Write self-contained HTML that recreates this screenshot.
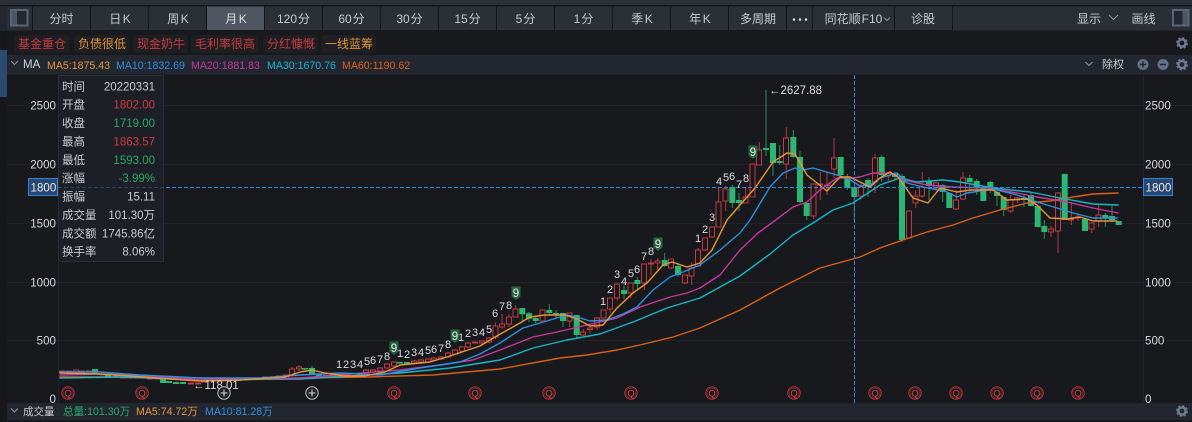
<!DOCTYPE html>
<html lang="zh"><head><meta charset="utf-8"><title>K线</title>
<style>
html,body{margin:0;padding:0;width:1192px;height:422px;overflow:hidden;background:#18191c}
svg{display:block;filter:blur(.3px)}
text{font-family:"Liberation Sans","Noto Sans CJK SC",sans-serif;font-size:11.5px;fill:#c9ccd1}
.t{font-size:12px;fill:#c6cad0;text-anchor:middle}
.m{font-size:10.6px}
.tag{font-size:12px}
.r{text-anchor:end}
.n{font-size:11px;text-anchor:middle;fill:#dadcdf}
.b{font-size:11.5px;text-anchor:middle;fill:#e4e6e8}
.q{font-size:9.5px;text-anchor:middle;fill:#dc444b}
.ax{font-size:11.6px;fill:#d4d6da}
.red{fill:#d0383f}.grn{fill:#2aa866}
</style></head><body>
<svg width="1192" height="422" viewBox="0 0 1192 422" xmlns="http://www.w3.org/2000/svg">
<defs>
<clipPath id="cc"><rect x="7" y="75" width="1185" height="328"/></clipPath>
<g id="gear"><circle r="3.6" fill="none" stroke="#6c7d93" stroke-width="2.4"/><circle r="5" fill="none" stroke="#6c7d93" stroke-width="1.8" stroke-dasharray="2.2 1.73"/></g>
<g id="qm"><circle r="6.2" fill="none" stroke="#c8383f" stroke-width=".9"/><circle r="5" fill="none" stroke="#a8343a" stroke-width=".5"/><text class="q" y="3.4">Q</text></g>
<g id="pl"><circle r="6.2" fill="#1e1f22" stroke="#b9bcc1" stroke-width="1"/><path d="M-3.5 0H3.5M0-3.5V3.5" stroke="#d8dadd" stroke-width="1.1"/></g>
<path id="bd" d="M-4.5-6.500h9v10l-4.500 3.500l-4.500-3.500z" fill="#24653d"/>
</defs>

<rect width="1192" height="422" fill="#18191c"/>
<!-- top strip -->
<rect width="1192" height="5" fill="#2b2f36"/>
<rect y="5" width="1192" height="1.5" fill="#15161a"/>
<!-- left col -->
<rect x="0" y="6" width="7" height="416" fill="#15171b"/>
<rect x="0" y="50" width="7" height="47" fill="#2a4a72"/>
<rect x="0" y="6" width="7" height="25" fill="#23272e"/>
<!-- tab bar -->
<rect x="7" y="6.500" width="1185" height="24" fill="#2a2e35"/>
<g fill="#2b3037" stroke="#15161a" stroke-width="1">
<rect x="32.500" y="6" width="58" height="24.500"/><rect x="90.500" y="6" width="58" height="24.500"/><rect x="148.500" y="6" width="58" height="24.500"/>
<rect x="264.500" y="6" width="58" height="24.500"/><rect x="322.500" y="6" width="58" height="24.500"/><rect x="380.500" y="6" width="58" height="24.500"/>
<rect x="438.500" y="6" width="58" height="24.500"/><rect x="496.500" y="6" width="58" height="24.500"/><rect x="554.500" y="6" width="58" height="24.500"/>
<rect x="612.500" y="6" width="58" height="24.500"/><rect x="670.500" y="6" width="58" height="24.500"/><rect x="728.500" y="6" width="58" height="24.500"/>
<rect x="786.500" y="6" width="26" height="24.500"/><rect x="812.500" y="6" width="82" height="24.500"/><rect x="894.500" y="6" width="58" height="24.500"/>
</g>
<rect x="206.500" y="6" width="58" height="24.500" fill="#4f5661" stroke="#15161a"/>
<rect x="11" y="10" width="16.500" height="15.500" fill="#23272e" stroke="#566579" stroke-width="2"/><rect x="12" y="11" width="5" height="13.500" fill="#4c5666"/>
<rect x="1173" y="10" width="15.500" height="15.500" fill="#23272e" stroke="#566579" stroke-width="2"/><rect x="1182.500" y="11" width="5" height="13.500" fill="#4c5666"/>
<text class="t" x="61.500" y="23">分时</text><text class="t" x="120" y="23">日<tspan dx="1.5">K</tspan></text><text class="t" x="178" y="23">周<tspan dx="1.5">K</tspan></text><text class="t" x="236" y="23" style="fill:#dcdfe3">月<tspan dx="1.5">K</tspan></text>
<text class="t" x="293.500" y="23">120<tspan dx="1">分</tspan></text><text class="t" x="351.500" y="23">60<tspan dx="1">分</tspan></text><text class="t" x="409.500" y="23">30<tspan dx="1">分</tspan></text><text class="t" x="467.500" y="23">15<tspan dx="1">分</tspan></text>
<text class="t" x="525.500" y="23">5<tspan dx="1">分</tspan></text><text class="t" x="583.500" y="23">1<tspan dx="1">分</tspan></text><text class="t" x="642" y="23">季<tspan dx="1.5">K</tspan></text><text class="t" x="700" y="23">年<tspan dx="1.5">K</tspan></text><text class="t" x="758" y="23">多周期</text>
<g fill="#d0d3d8"><circle cx="794" cy="19.500" r="1.300"/><circle cx="800" cy="19.500" r="1.300"/><circle cx="806" cy="19.500" r="1.300"/></g>
<text class="t" x="853.500" y="23">同花顺<tspan dx="1">F10</tspan></text><path d="M884 17.500l3 3l3-3" fill="none" stroke="#8b919a"/>
<text class="t" x="923" y="23">诊股</text>
<text class="t" x="1089" y="23">显示</text><path d="M1109 15l4.500 4.500l4.500-4.500" fill="none" stroke="#8b919a" stroke-width="1.100"/>
<text class="t" x="1143.500" y="23">画线</text>

<!-- tags row -->
<g fill="#1d1f23">
<rect x="14" y="35" width="56" height="18" rx="4"/><rect x="74" y="35" width="55" height="18" rx="4"/><rect x="133" y="35" width="55" height="18" rx="4"/><rect x="191" y="35" width="67" height="18" rx="4"/><rect x="263" y="35" width="55" height="18" rx="4"/><rect x="321" y="35" width="55" height="18" rx="4"/>
</g>
<text class="tag" x="18" y="48" style="fill:#c9393f">基金重仓</text><text class="tag" x="78" y="48" style="fill:#e0933a">负债很低</text><text class="tag" x="137" y="48" style="fill:#c9393f">现金奶牛</text><text class="tag" x="195" y="48" style="fill:#c9393f">毛利率很高</text><text class="tag" x="267" y="48" style="fill:#c9393f">分红慷慨</text><text class="tag" x="325" y="48" style="fill:#e0933a">一线蓝筹</text>
<g transform="translate(1182,43)"><use href="#gear"/></g>

<!-- MA row -->
<rect x="7" y="55" width="1185" height="19.500" fill="#22272f"/>
<path d="M11 61l3.500 3.500l3.500-3.500" fill="none" stroke="#8b919a" stroke-width="1.100"/>
<text x="23" y="68" style="font-size:11.500px;fill:#d0d3d8">MA</text>
<text class="m" x="47" y="69" style="fill:#e8953a">MA5:1875.43</text>
<text class="m" x="116" y="69" style="fill:#2f8fe0">MA10:1832.69</text>
<text class="m" x="191" y="69" style="fill:#c5389c">MA20:1881.83</text>
<text class="m" x="267" y="69" style="fill:#19b5cf">MA30:1670.76</text>
<text class="m" x="342" y="69" style="fill:#e0601a">MA60:1190.62</text>
<path d="M1085.500 62l3.500 3.500l3.500-3.500" fill="none" stroke="#8b919a" stroke-width="1.100"/>
<text x="1102" y="68" style="font-size:11px;fill:#c9ccd1">除权</text>
<circle cx="1143" cy="64.500" r="5.500" fill="#5f7088"/><path d="M1140 64.500h6M1143 61.500v6" stroke="#22272f" stroke-width="1.500"/>
<circle cx="1163" cy="64.500" r="5.500" fill="#5f7088"/><path d="M1160 64.500h6" stroke="#22272f" stroke-width="1.500"/>
<g transform="translate(1182,64.500)"><use href="#gear"/></g>

<!-- chart -->
<g clip-path="url(#cc)">
<path d="M7 105.500H1192M7 164.500H1192M7 223.500H1192M7 282.500H1192M7 340.500H1192" stroke="#202228" fill="none"/>
<path d="M58.500 75V402M1143.500 75V402" stroke="#212329"/>

<!-- wicks red -->
<path fill="none" stroke="#b5373c" d="M292 367V376M299 365V371M366 369V374M373 369V373M380 367V372M387 363V369M394 361V367M414 360V364M421 359V363M428 358V363M434 357V361M441 356V360M448 352V358M455 349V355M461 346V352M468 342V348M482 340V344M489 337V343M495.500 322.500V339M502 314V329M509 314V327M515.700 305V317M542.700 310V322M569.700 313V327M583.300 329V336M590 325V334M597 317V330M603.700 310V319M610.300 298V313M617.300 283V301M630.700 283V298M644.300 264V290M651 259V275M657.700 258V270M671.300 259V269M685 275V284M691.700 262V285M698.300 248V266M705 238V251M712 227V238M718.700 188V227M725.700 186V211M745.700 187V203M752.700 164V197M759.300 142V165M786.300 127V179M813.700 184V219M820.300 172V200M827 172V195M834 138V178M861 184V199M875 154V193M888.300 172V182M909 211V238M915.700 190V208M922.300 172V198M936 182V190M956.300 190V210M963 172V200M1010.700 195V213M1017.300 197V203M1051 226V237M1058 192V253M1071.300 202V225M1078 215V221M1091.700 222V233M1098.700 205V227"/>
<!-- wicks green -->
<path fill="none" stroke="#2a8f5e" d="M312 366V375M522.300 308V322M529 312V322M535.700 317V323M549.300 304V315M556 310V318M563 313V327M576.700 315V338M624 285V299M637.300 277V289M664.700 253V267M678 263V277M732.300 185V208M739 193V211M766 90V156M773 143V176M779.700 145V165M793.300 130V158M800 151V203M806.700 203V220M840.700 157V178M847.300 174V190M854.300 187V222M868 178V197M881.700 155V182M895 172V180M902 174V242M929 177V200M942.700 184V202M969.700 175V193M976.700 179V195M990.300 181V193M997 189V206M1003.700 197V216M1024 195V207M1031 192V206M1044.300 220V239M1105.300 213V227M1112 206V222"/>
<!-- red bodies -->
<path fill="#18191c" stroke="#c23b40" d="M59.500 371h5v1h-5zM66.500 371h5v2h-5zM73.500 370h5v3h-5zM79.500 371h5v2h-5zM86.500 371h5v1h-5zM100.500 374h5v1h-5zM113.500 376h5v1h-5zM120.500 377h5v1h-5zM127.500 377h5v1h-5zM134.500 377h5v1h-5zM140.500 377h5v1h-5zM147.500 378h5v1h-5zM154.500 378h5v1h-5zM188.500 383h5v1h-5zM195.500 383h5v1h-5zM201.500 381h5v1h-5zM208.500 380h5v1h-5zM215.500 380h5v1h-5zM222.500 380h5v1h-5zM228.500 379h5v1h-5zM242.500 379h5v1h-5zM249.500 378h5v1h-5zM256.500 378h5v1h-5zM262.500 377h5v2h-5zM276.500 376h5v2h-5zM283.500 375h5v3h-5zM289.500 369h5v6h-5zM296.500 367h5v2h-5zM330.500 375h5v1h-5zM344.500 375h5v1h-5zM357.500 375h5v1h-5zM363.500 370h5v3h-5zM370.500 370h5v2h-5zM377.500 368h5v3h-5zM384.500 364h5v4h-5zM391.500 362h5v4h-5zM411.500 361h5v2h-5zM418.500 360h5v2h-5zM425.500 359h5v3h-5zM431.500 358h5v2h-5zM438.500 357h5v2h-5zM445.500 353h5v4h-5zM452.500 350h5v4h-5zM459.500 347h5v4h-5zM465.500 343h5v4h-5zM472.500 342h5v1h-5zM479.500 341h5v2h-5zM486.500 338h5v4h-5zM493 326h5v11h-5zM499.500 324h5v3h-5zM506.500 317h5v7h-5zM513 309h5v8h-5zM540 310h5v11h-5zM567 313h5v8h-5zM580.500 332h5v3h-5zM587.500 328h5v1.500h-5zM594.500 318h5v9h-5zM601 310h5v8h-5zM607.500 298h5v11h-5zM614.500 284h5v14h-5zM628 283h5v10h-5zM641.500 264h5v19h-5zM648.500 263h5v1h-5zM655 261h5v2h-5zM668.500 259h5v9h-5zM682.500 275h5v8h-5zM689 268h5v8h-5zM695.500 250h5v16h-5zM702.500 238h5v12h-5zM709.500 227h5v10h-5zM716 202h5v25h-5zM723 189h5v12h-5zM743 197h5v6h-5zM750 164h5v33h-5zM756.500 150h5v15h-5zM783.500 138h5v26h-5zM811 184h5v32h-5zM817.500 184h5v1h-5zM824.500 185h5v1h-5zM831.500 158h5v11h-5zM858.500 187h5v9h-5zM872.500 158h5v24h-5zM885.500 173h5v3h-5zM906.500 211h5v27h-5zM913 196h5v7h-5zM919.500 187h5v9h-5zM933.500 183h5v5h-5zM953.500 200h5v9h-5zM960.500 178h5v21h-5zM1008 200h5v11h-5zM1014.500 198h5v2h-5zM1048.500 229h5v3h-5zM1055.500 193h5v38h-5zM1068.500 219h5v1h-5zM1075.500 217h5v1h-5zM1089 223h5v6h-5zM1096 215h5v6h-5z"/>
<!-- green bodies -->
<path fill="#2bb673" d="M92 369h6v4h-6zM105 375h6v3h-6zM160 379h6v4h-6zM166 381h6v2h-6zM173 382h6v2h-6zM180 382h6v2h-6zM235 380h6v1h-6zM268 377h6v2h-6zM302 368h6v1.500h-6zM309 368h6v6h-6zM316 374h6v2h-6zM323 375h6v1h-6zM337 375h6v1h-6zM397 362h6v1.500h-6zM404 362h6v1.500h-6zM519.300 308h6v6.300h-6zM526 313.300h6v5.400h-6zM532.700 318h6v3h-6zM546.300 310h6v3h-6zM553 313h6v2h-6zM560 313h6v8h-6zM573.700 315h6v20h-6zM621 290h6v4h-6zM634.300 280h6v4h-6zM661.700 260h6v6h-6zM675 266h6v9h-6zM729.300 187h6v16h-6zM736 200h6v3h-6zM763 148h6v2h-6zM770 143h6v20h-6zM776.700 161h6v2h-6zM790.300 137h6v20h-6zM797 157h6v45h-6zM803.700 203h6v13h-6zM837.700 157h6v18h-6zM844.300 177h6v11h-6zM851.300 187h6v10h-6zM865 180h6v7h-6zM878.700 157h6v18h-6zM892 174h6v3h-6zM899 176h6v64h-6zM926 181h6v5h-6zM939.700 185h6v7h-6zM946.300 193h6v15h-6zM966.700 178h6v4h-6zM973.700 181h6v7h-6zM980.300 188h6v13h-6zM987.300 182h6v6h-6zM994 192h6v4h-6zM1000.700 197h6v13h-6zM1021 198h6v2h-6zM1028 195h6v11h-6zM1034.700 206h6v21h-6zM1041.300 226h6v6h-6zM1061.700 174h6v46h-6zM1082 219h6v12h-6zM1102.300 215h6v3h-6zM1109 216h6v4h-6zM1115.700 221h6v4h-6z"/>

<!-- MA lines -->
<g fill="none" stroke-width="1.400" stroke-linejoin="round" stroke-linecap="round">
<polyline stroke="#d9601a" points="60,377 150,377 250,379 300,378 367,377 433,375 500,369 560,358 587,355 617,350 640,345 673,337 700,328 740,310 780,288 820,268 860,257 880,248 900,241 927,232 953,225 973,218 1000,210 1027,203 1050,201 1073,197 1093,194 1118,193"/>
<polyline stroke="#19b5c8" points="60,378 120,377 200,380 300,379 350,376 400,373 450,368 500,360 533,348 567,340 600,334 633,322 667,308 700,298 740,276 770,254 793,235 813,223 833,210 853,203 865,195 880,185 900,178 917,182 943,180 960,182 993,188 1030,192 1060,198 1093,204 1118,205"/>
<polyline stroke="#c5389c" points="60,375 100,374 150,376 200,380 300,378 350,374 400,370 440,365 473,360 500,350 533,337 557,332 587,325 617,318 640,307 670,297 687,293 700,288 720,275 740,250 758,233 773,222 793,207 807,202 820,190 837,178 853,178 860,177 873,173 890,173 903,180 927,185 953,187 987,188 1017,193 1037,197 1067,202 1093,208 1118,213"/>
<polyline stroke="#2f8fe0" points="60,372 100,372 140,375 200,378 260,378 300,375 340,373 380,375 420,368 460,362 480,354 500,343 523,328 540,323 567,315 577,317 590,321 607,320 623,314 637,307 653,290 670,277 683,272 700,265 720,250 740,233 750,220 770,187 783,173 795,168 803,170 813,168 830,173 847,178 860,186 870,185 880,178 897,173 907,183 923,187 947,192 957,197 967,193 993,189 1017,195 1037,202 1057,208 1073,213 1093,218 1117,218"/>
<polyline stroke="#e8953a" points="60,373 100,374 130,376 170,379 200,381 240,380 285,377 300,372 312,370 325,373 345,376 365,376 385,372 400,365 430,362 450,356 480,346 495,337 520,323 530,317 545,315 565,315 577,319 590,326 603,325 617,308 633,293 647,283 663,265 672,262 687,267 700,263 712,250 727,220 740,205 755,188 773,162 787,153 795,154 807,175 817,183 827,191 840,177 850,177 870,187 880,178 890,172 898,177 913,198 928,203 940,188 957,192 970,190 993,190 1007,200 1027,199 1037,205 1050,218 1067,219 1080,217 1093,221 1117,221"/>
</g>

<!-- crosshair -->
<path d="M58 187.500H1143" stroke="#2f8be0" stroke-dasharray="4 2" fill="none"/>
<path d="M854.500 75V403" stroke="#2f8be0" stroke-dasharray="4 2" fill="none"/>

<!-- sequence labels -->
<g class="seq">
<text class="n" x="339" y="368">1</text><text class="n" x="346" y="368">2</text><text class="n" x="353" y="368">3</text><text class="n" x="360" y="368">4</text><text class="n" x="367" y="365">5</text><text class="n" x="373" y="364">6</text><text class="n" x="380" y="363">7</text><text class="n" x="387" y="360">8</text>
<text class="n" x="400" y="357">1</text><text class="n" x="407" y="358">2</text><text class="n" x="414" y="356">3</text><text class="n" x="421" y="356">4</text><text class="n" x="428" y="354">5</text><text class="n" x="434" y="353">6</text><text class="n" x="441" y="352">7</text><text class="n" x="448" y="348">8</text>
<text class="n" x="461" y="341">1</text><text class="n" x="468" y="337">2</text><text class="n" x="475" y="336">3</text><text class="n" x="482" y="336">4</text><text class="n" x="489" y="333">5</text><text class="n" x="495" y="317">6</text><text class="n" x="502" y="310">7</text><text class="n" x="509" y="309">8</text>
<text class="n" x="603" y="305">1</text><text class="n" x="610" y="293">2</text><text class="n" x="617" y="278">3</text><text class="n" x="624" y="285">4</text><text class="n" x="631" y="277">5</text><text class="n" x="637" y="273">6</text><text class="n" x="644" y="260">7</text><text class="n" x="651" y="255">8</text>
<text class="n" x="698" y="242">1</text><text class="n" x="705" y="233">2</text><text class="n" x="712" y="221">3</text><text class="n" x="719" y="185">4</text><text class="n" x="726" y="181">5</text><text class="n" x="732" y="180">6</text><text class="n" x="739" y="188">7</text><text class="n" x="746" y="182">8</text>
<use href="#bd" x="394" y="348"/><text class="b" x="394" y="352">9</text>
<use href="#bd" x="455" y="336"/><text class="b" x="455" y="340">9</text>
<use href="#bd" x="516" y="293"/><text class="b" x="516" y="297">9</text>
<use href="#bd" x="658" y="244"/><text class="b" x="658" y="248">9</text>
<use href="#bd" x="753" y="152"/><text class="b" x="753" y="156">9</text>
</g>
<text x="769" y="94" style="font-size:11.500px;fill:#dcdee1">←2627.88</text>
<text x="193" y="389" style="font-size:11.500px;fill:#dcdee1">←118.01</text>

<!-- markers -->
<g>
<use href="#qm" x="68" y="393"/><use href="#qm" x="142" y="393"/><use href="#qm" x="394" y="393"/><use href="#qm" x="475" y="393"/><use href="#qm" x="549" y="393"/><use href="#qm" x="631" y="393"/><use href="#qm" x="712" y="393"/><use href="#qm" x="794" y="393"/><use href="#qm" x="875" y="393"/><use href="#qm" x="915" y="393"/><use href="#qm" x="956" y="393"/><use href="#qm" x="997" y="393"/><use href="#qm" x="1037" y="393"/><use href="#qm" x="1078" y="393"/>
<use href="#pl" x="224" y="393"/><use href="#pl" x="312" y="393"/>
</g>

<!-- axes -->
<g class="axl">
<text class="ax r" x="56" y="109.500">2500</text><text class="ax r" x="56" y="168.500">2000</text><text class="ax r" x="56" y="227.500">1500</text><text class="ax r" x="56" y="286.500">1000</text><text class="ax r" x="56" y="344.500">500</text><text class="ax r" x="56" y="403">0</text>
<text class="ax" x="1145" y="109.500">2500</text><text class="ax" x="1145" y="168.500">2000</text><text class="ax" x="1145" y="227.500">1500</text><text class="ax" x="1145" y="286.500">1000</text><text class="ax" x="1145" y="344.500">500</text><text class="ax" x="1145" y="403">0</text>
</g>
<rect x="28.500" y="178.500" width="29" height="17" fill="#28466f" stroke="#2d87d4"/>
<rect x="1143.500" y="178.500" width="29" height="17" fill="#28466f" stroke="#2d87d4"/>
<text class="ax" x="30.500" y="191.500" style="fill:#e8eaec">1800</text>
<text class="ax" x="1145.500" y="191.500" style="fill:#e8eaec">1800</text>

<!-- tooltip -->
<rect x="58.500" y="75.500" width="105" height="186" fill="#1c2026" fill-opacity=".95" stroke="#2a2e35"/>
<path d="M58 187.500H164" stroke="#2d87d4" stroke-dasharray="4 2" opacity=".35"/>
<g>
<text x="62" y="90.500">时间</text><text class="r" x="155" y="90.500">20220331</text>
<text x="62" y="108.500">开盘</text><text class="r red" x="155" y="108.500">1802.00</text>
<text x="62" y="127">收盘</text><text class="r grn" x="155" y="127">1719.00</text>
<text x="62" y="145.500">最高</text><text class="r red" x="155" y="145.500">1863.57</text>
<text x="62" y="164">最低</text><text class="r grn" x="155" y="164">1593.00</text>
<text x="62" y="182">涨幅</text><text class="r grn" x="155" y="182">-3.99%</text>
<text x="62" y="200.500">振幅</text><text class="r" x="155" y="200.500">15.11</text>
<text x="62" y="219">成交量</text><text class="r" x="155" y="219">101.30万</text>
<text x="62" y="237.500">成交额</text><text class="r" x="155" y="237.500">1745.86亿</text>
<text x="62" y="255.500">换手率</text><text class="r" x="155" y="255.500">8.06%</text>
</g>
</g>

<!-- volume row -->
<rect x="7" y="403" width="1185" height="17" fill="#22272f"/>
<rect x="7" y="420" width="1185" height="2" fill="#18191c"/>
<path d="M11 408.500l3.500 3.500l3.500-3.500" fill="none" stroke="#8b919a" stroke-width="1.100"/>
<text x="23" y="415" style="font-size:10.500px;fill:#c9ccd1">成交量</text>
<text class="m" x="63" y="415" style="fill:#2aa866">总量:101.30万</text>
<text class="m" x="136" y="415" style="fill:#e8953a">MA5:74.72万</text>
<text class="m" x="205" y="415" style="fill:#2f8fe0">MA10:81.28万</text>
<g transform="translate(1182,411)"><use href="#gear"/></g>
</svg>
</body></html>
